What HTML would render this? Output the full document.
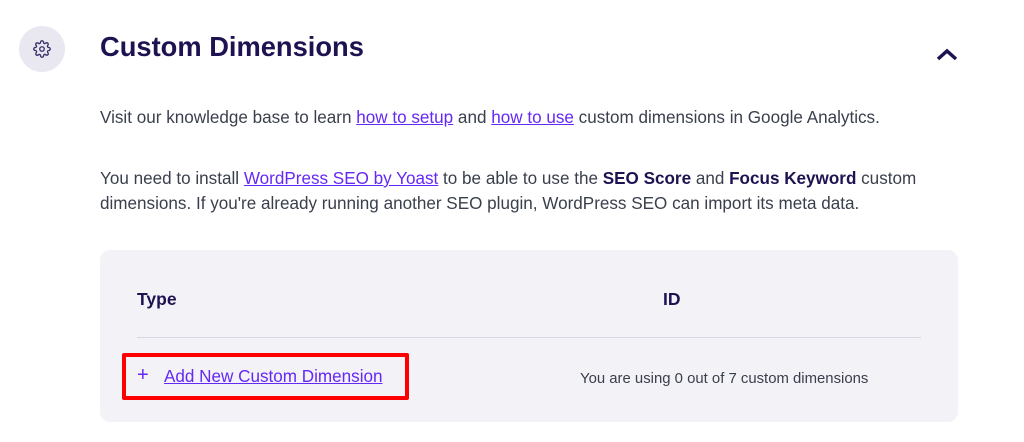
<!DOCTYPE html>
<html><head><style>
body{margin:0;width:1024px;height:442px;background:#fff;font-family:"Liberation Sans",sans-serif;position:relative;overflow:hidden}
.a{position:absolute;white-space:nowrap}
p{margin:0}
.t{font-size:17.1px;color:#393f4c}
a{color:#6528f5;text-decoration:underline}
b{color:#1e1251}
</style></head><body>
<div class="a" style="left:19px;top:26px;width:46px;height:46px;border-radius:50%;background:#e9e7f0"></div>
<svg class="a" style="left:33px;top:40px" width="18" height="18" viewBox="0 0 24 24" fill="none" stroke="#3a2f6b" stroke-width="1.8"><circle cx="12" cy="12" r="3"/><path d="M19.4 15a1.650 1.65 0 0 0 .33 1.82l.06.06a2 2 0 1 1-2.83 2.830l-.06-.06a1.65 1.65 0 0 0-1.82-.33 1.65 1.65 0 0 0-1 1.51V21a2 2 0 1 1-4 0v-.09A1.65 1.65 0 0 0 9 19.4a1.65 1.65 0 0 0-1.82.33l-.06.06a2 2 0 1 1-2.83-2.83l.06-.06A1.65 1.65 0 0 0 4.68 15a1.65 1.65 0 0 0-1.51-1H3a2 2 0 1 1 0-4h.09A1.65 1.65 0 0 0 4.6 9a1.65 1.65 0 0 0-.33-1.82l-.06-.06a2 2 0 1 1 2.83-2.83l.06.06A1.65 1.65 0 0 0 9 4.68 1.65 1.65 0 0 0 10 3.17V3a2 2 0 1 1 4 0v.09a1.65 1.65 0 0 0 1 1.51 1.65 1.65 0 0 0 1.82-.33l.06-.06a2 2 0 1 1 2.83 2.83l-.06.06A1.65 1.65 0 0 0 19.4 9a1.65 1.65 0 0 0 1.51 1H21a2 2 0 1 1 0 4h-.09a1.65 1.65 0 0 0-1.51 1z"/></svg>
<div class="a" style="left:100px;top:31px;font-size:27.3px;font-weight:bold;color:#1e1251">Custom Dimensions</div>
<svg class="a" style="left:935px;top:46px" width="24" height="16" viewBox="0 0 24 16"><path d="M3 13 L12 5 L21 13" fill="none" stroke="#1e1251" stroke-width="3.5"/></svg>
<p class="a t" style="left:100px;top:108px">Visit our knowledge base to learn <a>how to setup</a> and <a>how to use</a> custom dimensions in Google Analytics.</p>
<p class="a t" style="left:100px;top:166px;line-height:25px">You need to install <a>WordPress SEO by Yoast</a> to be able to use the <b>SEO Score</b> and <b>Focus Keyword</b> custom<br>dimensions. If you're already running another SEO plugin, WordPress SEO can import its meta data.</p>
<div class="a" style="left:100px;top:250px;width:858px;height:172px;border-radius:10px;background:#f3f2f7"></div>
<div class="a" style="left:137px;top:289px;font-size:17.5px;font-weight:bold;color:#1e1251">Type</div>
<div class="a" style="left:663px;top:289px;font-size:17.5px;font-weight:bold;color:#1e1251">ID</div>
<div class="a" style="left:137px;top:337px;width:784px;height:1px;background:#d8d6e3"></div>
<div class="a" style="left:122px;top:353px;width:279px;height:39px;border:4px solid #f00;border-radius:2px"></div>
<div class="a" style="left:137px;top:364px;font-size:20px;color:#6528f5">+</div>
<div class="a t" style="left:164px;top:367px"><a>Add New Custom Dimension</a></div>
<div class="a" style="left:580px;top:371px;font-size:14.9px;color:#393f4c">You are using 0 out of 7 custom dimensions</div>
</body></html>
